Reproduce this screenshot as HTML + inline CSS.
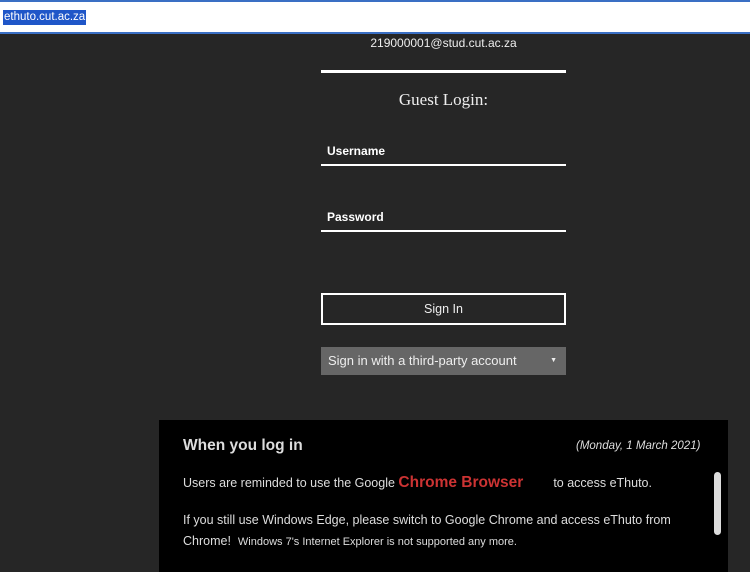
<!DOCTYPE html>
<html><head><meta charset="utf-8"><style>
*{margin:0;padding:0;box-sizing:border-box}
body{width:750px;height:572px;overflow:hidden;background:#262626;font-family:"Liberation Sans",sans-serif;position:relative;color:#fff}
.abs{position:absolute}
#bar{left:0;top:0;width:750px;height:34px;background:#fff;border-top:2px solid #3a6fc4;border-bottom:2px solid #3a6fc4}
#sel{left:3px;top:10px;background:#1f56c8;color:#fff;font-size:11.5px;padding:0 1px;line-height:15px}
.line{background:#fff;left:321px;width:245px}
</style></head><body>
<div id="bar" class="abs"></div>
<div id="sel" class="abs">ethuto.cut.ac.za</div>
<div class="abs" style="left:321px;width:245px;top:36px;text-align:center;font-size:12px;color:#eee">219000001@stud.cut.ac.za</div>
<div class="abs line" style="top:70px;height:3px"></div>
<div class="abs" style="left:321px;width:245px;top:90px;text-align:center;font-family:'Liberation Serif',serif;font-size:17px;color:#eee">Guest Login:</div>
<div class="abs" style="left:327px;top:144px;font-size:12px;font-weight:bold">Username</div>
<div class="abs line" style="top:164px;height:2px"></div>
<div class="abs" style="left:327px;top:210px;font-size:12px;font-weight:bold">Password</div>
<div class="abs line" style="top:230px;height:2px"></div>
<div class="abs" style="left:321px;top:293px;width:245px;height:32px;border:2px solid #fff;text-align:center;line-height:28px;font-size:12.5px;color:#eee">Sign In</div>
<div class="abs" style="left:321px;top:347px;width:245px;height:28px;background:#666;font-size:13px;line-height:28px;padding-left:7px;color:#eee">Sign in with a third-party account<span style="position:absolute;right:9px;font-size:7px">▼</span></div>
<div class="abs" style="left:159px;top:420px;width:569px;height:152px;background:#000"></div>
<div class="abs" style="left:183px;top:437px;font-size:15.5px;font-weight:bold;color:#ddd">When you log in</div>
<div class="abs" style="left:576px;top:440px;font-size:11.5px;font-style:italic;color:#ddd">(Monday, 1 March 2021)</div>
<div class="abs" style="left:183px;top:474px;font-size:12.5px;color:#ddd">Users are reminded to use the Google <span style="color:#c33;font-weight:bold;font-size:15.5px">Chrome Browser</span><span style="display:inline-block;width:30px"></span>to access eThuto.</div>
<div class="abs" style="left:183px;top:510px;font-size:12.5px;color:#ddd;line-height:21px;width:540px">If you still use Windows Edge, please switch to Google Chrome and access eThuto from<br>Chrome!&nbsp; <span style="font-size:11px">Windows 7's Internet Explorer is not supported any more.</span></div>
<div class="abs" style="left:714px;top:472px;width:7px;height:63px;background:#ddd;border-radius:4px"></div>
</body></html>
